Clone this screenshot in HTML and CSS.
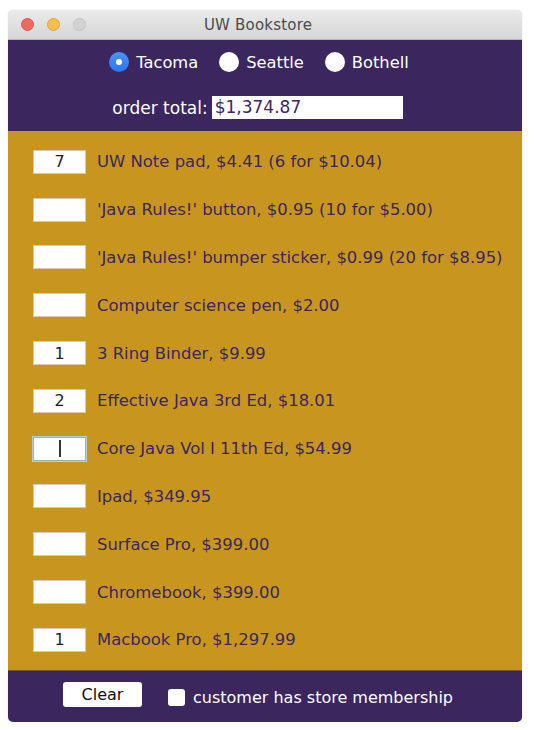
FILE: index.html
```html
<!DOCTYPE html>
<html>
<head>
<meta charset="utf-8">
<title>UW Bookstore</title>
<link rel="stylesheet" href="styles.css">
</head>
<body>
<div class="window">
  <div class="titlebar">
    <div class="lights">
      <span class="light red"></span>
      <span class="light yellow"></span>
      <span class="light gray"></span>
    </div>
    <div class="title">UW Bookstore</div>
  </div>
  <div class="header">
    <div class="radios">
      <label class="radio"><span class="dot on"></span>Tacoma</label>
      <label class="radio"><span class="dot"></span>Seattle</label>
      <label class="radio"><span class="dot"></span>Bothell</label>
    </div>
    <div class="total">
      <span class="total-label">order total:</span>
      <span class="total-field">$1,374.87</span>
    </div>
  </div>
  <div class="items">
    <div class="row"><span class="qty">7</span><span class="desc">UW Note pad, $4.41 (6 for $10.04)</span></div>
    <div class="row"><span class="qty"></span><span class="desc">'Java Rules!' button, $0.95 (10 for $5.00)</span></div>
    <div class="row"><span class="qty"></span><span class="desc">'Java Rules!' bumper sticker, $0.99 (20 for $8.95)</span></div>
    <div class="row"><span class="qty"></span><span class="desc">Computer science pen, $2.00</span></div>
    <div class="row"><span class="qty">1</span><span class="desc">3 Ring Binder, $9.99</span></div>
    <div class="row"><span class="qty">2</span><span class="desc">Effective Java 3rd Ed, $18.01</span></div>
    <div class="row"><span class="qty focus"><span class="caret"></span></span><span class="desc">Core Java Vol I 11th Ed, $54.99</span></div>
    <div class="row"><span class="qty"></span><span class="desc">Ipad, $349.95</span></div>
    <div class="row"><span class="qty"></span><span class="desc">Surface Pro, $399.00</span></div>
    <div class="row"><span class="qty"></span><span class="desc">Chromebook, $399.00</span></div>
    <div class="row"><span class="qty">1</span><span class="desc">Macbook Pro, $1,297.99</span></div>
  </div>
  <div class="footer">
    <span class="btn">Clear</span>
    <label class="check"><span class="box"></span>customer has store membership</label>
  </div>
</div>
</body>
</html>
```
FILE: styles.css
```css
html, body {
  margin: 0;
  padding: 0;
  background: #ffffff;
}
body {
  font-family: "DejaVu Sans", "Liberation Sans", sans-serif;
}
.window {
  margin: 10px 0 0 8px;
  width: 514px;
  height: 712px;
  border-radius: 5px;
  overflow: hidden;
  display: flex;
  flex-direction: column;
  box-shadow: 0 0 1px rgba(0,0,0,0.25);
}
.titlebar {
  height: 29px;
  flex: none;
  background: linear-gradient(#ebebeb, #d5d5d5);
  border-bottom: 1px solid #b8b8b8;
  display: flex;
  align-items: center;
  position: relative;
}
.lights {
  display: flex;
  gap: 13px;
  padding-left: 13px;
}
.light {
  width: 13px;
  height: 13px;
  border-radius: 50%;
  box-sizing: border-box;
}
.red { background: #ec6a5e; border: 1px solid #d65a4f; }
.yellow { background: #f4bf4f; border: 1px solid #dca33e; }
.gray { background: #d3d3d3; border: 1px solid #c2c2c2; }
.title {
  position: absolute;
  left: 0;
  right: 14px;
  top: 0;
  bottom: 0;
  display: flex;
  align-items: center;
  justify-content: center;
  font-size: 15px;
  color: #4b4b4b;
  letter-spacing: 0.2px;
}
.header {
  height: 91px;
  flex: none;
  background: #3b265e;
  color: #ffffff;
  display: flex;
  flex-direction: column;
  align-items: center;
}
.radios {
  display: flex;
  align-items: center;
  height: 20px;
  margin-top: 12px;
  margin-right: 12px;
  font-size: 16.3px;
}
.radio {
  display: flex;
  align-items: center;
  margin-right: 21px;
}
.radio:last-child { margin-right: 0; }
.dot {
  width: 20px;
  height: 20px;
  border-radius: 50%;
  background: #ffffff;
  margin-right: 7px;
  box-sizing: border-box;
  position: relative;
}
.dot.on {
  background: linear-gradient(#4a93f8, #2a76f0);
}
.dot.on::after {
  content: "";
  position: absolute;
  left: 7px;
  top: 7px;
  width: 6px;
  height: 6px;
  border-radius: 50%;
  background: #ffffff;
}
.total {
  display: flex;
  align-items: center;
  margin-top: 24px;
  margin-right: 15px;
  font-size: 17px;
}
.total-label {
  margin-right: 4px;
}
.total-field {
  width: 191px;
  height: 23px;
  box-sizing: border-box;
  background: #ffffff;
  color: #3b265e;
  padding-left: 3px;
  line-height: 23px;
  font-size: 17px;
}
.items {
  flex: 1;
  background: #c8961e;
  padding-top: 7px;
  display: flex;
  flex-direction: column;
}
.row {
  height: 47.8px;
  display: flex;
  align-items: center;
  padding-left: 25px;
}
.qty {
  width: 53px;
  height: 24px;
  box-sizing: border-box;
  background: #ffffff;
  border: 1px solid #d8c9a8;
  display: flex;
  align-items: center;
  justify-content: center;
  font-size: 16px;
  color: #1e1e1e;
  flex: none;
}
.qty.focus {
  border: 1px solid #8fb4c8;
  box-shadow: 0 0 0 1px #b8cfd6;
}
.caret {
  width: 2px;
  height: 17px;
  background: #333333;
}
.desc {
  margin-left: 11px;
  font-size: 16.45px;
  color: #3b265e;
  white-space: nowrap;
}
.footer {
  height: 52px;
  flex: none;
  background: #3b265e;
  border-top: 1px solid #7a5a20;
  box-sizing: border-box;
  display: flex;
  align-items: center;
  padding-left: 55px;
}
.btn {
  width: 79px;
  height: 25px;
  background: #ffffff;
  border-radius: 3px;
  display: flex;
  align-items: center;
  justify-content: center;
  font-size: 16px;
  color: #111111;
  margin-top: -4px;
}
.check {
  display: flex;
  align-items: center;
  margin-left: 26px;
  color: #ffffff;
  font-size: 16px;
  margin-top: 2px;
}
.box {
  width: 17px;
  height: 17px;
  background: #ffffff;
  border-radius: 3px;
  margin-right: 8px;
}
```
